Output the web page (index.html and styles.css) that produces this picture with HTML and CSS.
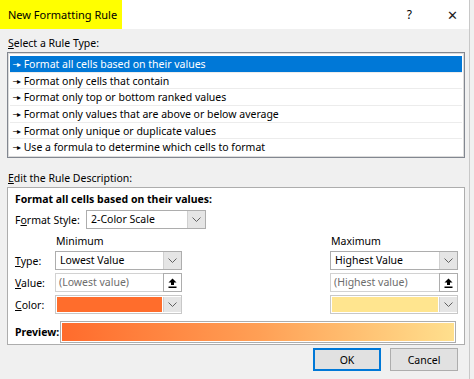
FILE: index.html
```html
<!DOCTYPE html>
<html lang="en">
<head>
  <meta charset="UTF-8">
  <title>New Formatting Rule</title>
  <link rel="stylesheet" href="styles.css">
</head>
<body>
  <div class="dialog">
    <div class="titlebar">
      <div class="title">New Formatting Rule</div>
      <div class="title-buttons">
        <span class="help">?</span>
        <span class="close">&#x2715;</span>
      </div>
    </div>

    <div class="content">
      <div class="section-label"><u>S</u>elect a Rule Type:</div>
      <ul class="rule-list">
        <li class="selected"><span class="arrow">&#x2500;&#x25B8;</span>Format all cells based on their values</li>
        <li><span class="arrow">&#x2500;&#x25B8;</span>Format only cells that contain</li>
        <li><span class="arrow">&#x2500;&#x25B8;</span>Format only top or bottom ranked values</li>
        <li><span class="arrow">&#x2500;&#x25B8;</span>Format only values that are above or below average</li>
        <li><span class="arrow">&#x2500;&#x25B8;</span>Format only unique or duplicate values</li>
        <li><span class="arrow">&#x2500;&#x25B8;</span>Use a formula to determine which cells to format</li>
      </ul>

      <div class="section-label desc-label"><u>E</u>dit the Rule Description:</div>
      <div class="desc-box">
        <div class="desc-title">Format all cells based on their values:</div>
        <div class="style-row">
          <span class="field-label">F<u>o</u>rmat Style:</span>
          <div class="combo style-combo">
            <span class="combo-text">2-Color Scale</span>
            <span class="combo-btn"><svg width="9" height="5" viewBox="0 0 9 5"><path d="M0.5 0.5 L4.5 4.5 L8.5 0.5" fill="none" stroke="#606060" stroke-width="1"/></svg></span>
          </div>
        </div>

        <div class="scale-grid">
          <span></span>
          <span class="col-head">Minimum</span>
          <span></span>
          <span class="col-head">Maximum</span>

          <span class="field-label"><u>T</u>ype:</span>
          <div class="combo">
            <span class="combo-text">Lowest Value</span>
            <span class="combo-btn"><svg width="9" height="5" viewBox="0 0 9 5"><path d="M0.5 0.5 L4.5 4.5 L8.5 0.5" fill="none" stroke="#606060" stroke-width="1"/></svg></span>
          </div>
          <span></span>
          <div class="combo">
            <span class="combo-text">Highest Value</span>
            <span class="combo-btn"><svg width="9" height="5" viewBox="0 0 9 5"><path d="M0.5 0.5 L4.5 4.5 L8.5 0.5" fill="none" stroke="#606060" stroke-width="1"/></svg></span>
          </div>

          <span class="field-label"><u>V</u>alue:</span>
          <div class="input">
            <span class="input-text">(Lowest value)</span>
            <span class="ref-btn"><svg width="9" height="10" viewBox="0 0 9 10"><path d="M4.5 0.5 L8.5 4.5 L6 4.5 L6 7 L3 7 L3 4.5 L0.5 4.5 Z" fill="#000"/><rect x="0.5" y="8.5" width="8" height="1.5" fill="#000"/></svg></span>
          </div>
          <span></span>
          <div class="input">
            <span class="input-text">(Highest value)</span>
            <span class="ref-btn"><svg width="9" height="10" viewBox="0 0 9 10"><path d="M4.5 0.5 L8.5 4.5 L6 4.5 L6 7 L3 7 L3 4.5 L0.5 4.5 Z" fill="#000"/><rect x="0.5" y="8.5" width="8" height="1.5" fill="#000"/></svg></span>
          </div>

          <span class="field-label"><u>C</u>olor:</span>
          <div class="combo color-combo">
            <span class="swatch min-swatch"></span>
            <span class="combo-btn"><svg width="9" height="5" viewBox="0 0 9 5"><path d="M0.5 0.5 L4.5 4.5 L8.5 0.5" fill="none" stroke="#606060" stroke-width="1"/></svg></span>
          </div>
          <span></span>
          <div class="combo color-combo">
            <span class="swatch max-swatch"></span>
            <span class="combo-btn"><svg width="9" height="5" viewBox="0 0 9 5"><path d="M0.5 0.5 L4.5 4.5 L8.5 0.5" fill="none" stroke="#606060" stroke-width="1"/></svg></span>
          </div>
        </div>

        <div class="preview-row">
          <span class="preview-label">Preview:</span>
          <div class="preview-bar"></div>
        </div>
      </div>

      <div class="buttons">
        <button class="btn default">OK</button>
        <button class="btn">Cancel</button>
      </div>
    </div>
  </div>
</body>
</html>
```

FILE: styles.css
```css
* {
  margin: 0;
  padding: 0;
  box-sizing: border-box;
}

body {
  font-family: "Noto Sans", "Open Sans", sans-serif;
  font-size: 10.5px;
  color: #000;
  background: #f0f0f0;
  width: 474px;
  height: 379px;
  overflow: hidden;
}

.dialog {
  width: 470px;
  height: 379px;
  background: #f0f0f0;
  border-right: 1px solid #c8c8c8;
}

.titlebar {
  height: 29px;
  background: #fff;
  display: flex;
  align-items: stretch;
  justify-content: space-between;
}

.title {
  width: 122px;
  background: #ffff00;
  padding-left: 8px;
  font-size: 11px;
  line-height: 29px;
  white-space: nowrap;
}

.title-buttons {
  display: flex;
  align-items: center;
  gap: 35px;
  padding-right: 11px;
}

.help {
  font-size: 12px;
}

.close {
  font-size: 13px;
  color: #222;
}

.content {
  padding: 6px 4px 0 7px;
}

.section-label {
  height: 17px;
  line-height: 16px;
  padding-left: 1px;
}

.rule-list {
  list-style: none;
  background: #fff;
  border: 1px solid #828790;
  box-shadow: inset 0 0 0 1px #dcdcdc;
  padding: 3px 2px 2px 2px;
  height: 106px;
}

.rule-list li {
  height: 16.7px;
  line-height: 16px;
  padding-left: 3px;
  border-bottom: 1px solid #ececec;
  white-space: nowrap;
}

.rule-list li:last-child {
  border-bottom: none;
}

.rule-list li.selected {
  background: #0078d7;
  color: #fff;
}

.arrow {
  font-size: 8px;
  letter-spacing: -2px;
  margin-right: 5px;
  vertical-align: 1px;
}

.desc-label {
  margin-top: 12px;
}

.desc-box {
  height: 158px;
  background: #fff;
  border: 1px solid #adadad;
  padding: 4px 8px 0 7px;
}

.desc-title {
  font-weight: bold;
  height: 14px;
  line-height: 14px;
}

.style-row {
  display: flex;
  align-items: center;
  margin-top: 4px;
}

.style-row .field-label {
  width: 71px;
}

.combo {
  display: flex;
  align-items: stretch;
  height: 19px;
  border: 1px solid #adadad;
  background: #fff;
}

.style-combo {
  width: 120px;
}

.combo-text {
  flex: 1;
  padding-left: 4px;
  line-height: 17px;
  white-space: nowrap;
}

.combo-btn {
  width: 18px;
  display: flex;
  align-items: center;
  justify-content: center;
  background: #e5e5e5;
  border-left: 1px solid #d0d0d0;
}

.scale-grid {
  display: grid;
  grid-template-columns: 40px 127px 148px 128px;
  grid-template-rows: 13px;
  grid-auto-rows: 19px;
  row-gap: 3px;
  align-items: center;
  margin-top: 6px;
}

.col-head {
  padding-left: 1px;
  line-height: 13px;
}

.field-label {
  white-space: nowrap;
}

.input {
  display: flex;
  height: 19px;
  border: 1px solid #d2d2d2;
  background: #fff;
}

.input-text {
  flex: 1;
  color: #6d6d6d;
  padding-left: 3px;
  line-height: 17px;
}

.ref-btn {
  width: 19px;
  display: flex;
  align-items: center;
  justify-content: center;
  border: 1px solid #adadad;
  margin: -1px -1px -1px 0;
  background: #fff;
}

.color-combo {
  padding: 1px 0 1px 1px;
  border-color: #c8c8c8;
}

.swatch {
  flex: 1;
  margin-right: 1px;
}

.min-swatch {
  background: #ff6d2c;
}

.max-swatch {
  background: #ffe58f;
}

.preview-row {
  display: flex;
  align-items: center;
  margin-top: 7px;
}

.preview-label {
  font-weight: bold;
  width: 45px;
}

.preview-bar {
  width: 399px;
  height: 22px;
  border: 1px solid #adadad;
  background: linear-gradient(to right, #ff6b2c, #ff9f55 50%, #ffe08e);
  box-shadow: inset 0 0 0 1px #fff;
}

.buttons {
  display: flex;
  justify-content: flex-end;
  gap: 9px;
  padding-right: 7px;
  margin-top: 3px;
}

.btn {
  width: 68px;
  height: 23px;
  font-family: inherit;
  font-size: 10.5px;
  background: #e1e1e1;
  border: 1px solid #adadad;
  color: #000;
}

.btn.default {
  border: 2px solid #0078d7;
}
```
